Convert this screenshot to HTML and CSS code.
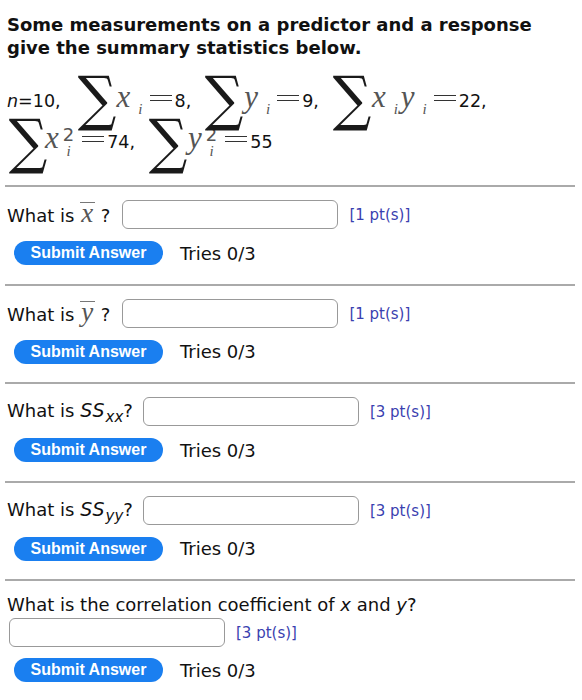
FILE: index.html
```html
<!DOCTYPE html>
<html>
<head>
<meta charset="utf-8">
<link rel="stylesheet" href="styles.css">
</head>
<body>
<div class="page">
  <h1 class="title">Some measurements on a predictor and a response give the summary statistics below.</h1>

  <div class="stats">
    <div class="mline one"><span class="num"><i>n</i>=10,</span><span class="sum lead">∑</span><span class="mv">x</span><span class="sub">i</span><span class="eq"></span><span class="num">8,</span><span class="sum">∑</span><span class="mv">y</span><span class="sub">i</span><span class="eq"></span><span class="num">9,</span><span class="sum">∑</span><span class="mv">x</span><span class="sub mid">i</span><span class="mv">y</span><span class="sub">i</span><span class="eq"></span><span class="num">22,</span></div>
    <div class="mline two"><span class="sum first">∑</span><span class="mv">x</span><span class="supsub"><span class="sp">2</span><span class="sb">i</span></span><span class="eq"></span><span class="num">74,</span><span class="sum">∑</span><span class="mv">y</span><span class="supsub"><span class="sp">2</span><span class="sb">i</span></span><span class="eq"></span><span class="num">55</span></div>
  </div>

  <section class="q">
    <div class="ask">
      <span class="label">What is <span class="bar">x</span> ?</span>
      <input class="field" type="text">
      <span class="pts">[1 pt(s)]</span>
    </div>
    <div class="act"><button class="submit">Submit Answer</button><span class="tries">Tries 0/3</span></div>
  </section>

  <section class="q">
    <div class="ask">
      <span class="label">What is <span class="bar">y</span> ?</span>
      <input class="field" type="text">
      <span class="pts">[1 pt(s)]</span>
    </div>
    <div class="act"><button class="submit">Submit Answer</button><span class="tries">Tries 0/3</span></div>
  </section>

  <section class="q">
    <div class="ask">
      <span class="label ss">What is <i class="ssi">SS</i><sub class="ssub">xx</sub>?</span>
      <input class="field" type="text">
      <span class="pts">[3 pt(s)]</span>
    </div>
    <div class="act"><button class="submit">Submit Answer</button><span class="tries">Tries 0/3</span></div>
  </section>

  <section class="q">
    <div class="ask">
      <span class="label ss">What is <i class="ssi">SS</i><sub class="ssub">yy</sub>?</span>
      <input class="field" type="text">
      <span class="pts">[3 pt(s)]</span>
    </div>
    <div class="act"><button class="submit">Submit Answer</button><span class="tries">Tries 0/3</span></div>
  </section>

  <section class="q last">
    <div class="qtext">What is the correlation coefficient of <i>x</i> and <i>y</i>?</div>
    <div class="ask tight">
      <input class="field" type="text">
      <span class="pts">[3 pt(s)]</span>
    </div>
    <div class="act"><button class="submit">Submit Answer</button><span class="tries">Tries 0/3</span></div>
  </section>
</div>
</body>
</html>
```

FILE: styles.css
```css
html, body {
  margin: 0;
  padding: 0;
  background: #fff;
}

body {
  font-family: "DejaVu Sans", Verdana, sans-serif;
  color: #111;
}

.page {
  width: 570px;
  padding: 0 7px 0 5px;
}

.title {
  margin: 13px 0 0 2px;
  font-size: 18px;
  line-height: 23px;
  font-weight: bold;
  width: 560px;
}

.stats {
  margin: 22px 0 0 2px;
  height: 104px;
}

.mline {
  font-size: 17.5px;
  line-height: 41px;
  height: 41px;
  white-space: nowrap;
}

.num {
  color: #111;
}

.num i {
  font-style: italic;
}

.sum {
  display: inline-block;
  width: 37px;
  text-align: center;
  font-family: "DejaVu Serif", "Liberation Serif", serif;
  font-size: 60px;
  height: 20px;
  line-height: 20px;
  vertical-align: -12px;
  color: #1a1a1a;
  margin-left: 12px;
  margin-right: 4px;
  transform: scaleX(0.9);
}

.two .sum {
  vertical-align: -14px;
}

.sum.lead {
  margin-left: 15px;
}

.sum.first {
  margin-left: 0;
  margin-right: 1px;
}

.mv {
  font-family: "Liberation Serif", "DejaVu Serif", serif;
  font-style: italic;
  font-size: 31px;
  line-height: 20px;
  color: #555;
}

.sub {
  font-family: "Liberation Serif", serif;
  font-style: italic;
  font-size: 15px;
  line-height: 10px;
  color: #555;
  vertical-align: -7px;
  margin: 0 7px 0 8px;
}

.sub.mid {
  margin-right: 3px;
}

.supsub {
  display: inline-flex;
  flex-direction: column;
  align-items: center;
  vertical-align: 7px;
  line-height: 14px;
  margin: 0 8px 0 4px;
  font-family: "Liberation Serif", serif;
  color: #555;
}

.supsub .sp {
  font-size: 18px;
  font-family: "DejaVu Sans", sans-serif;
}

.supsub .sb {
  font-size: 15px;
  font-style: italic;
  margin-top: 2px;
}

.eq {
  display: inline-block;
  width: 22px;
  height: 4px;
  border-top: 1.5px solid #333;
  border-bottom: 1.5px solid #333;
  vertical-align: 6px;
  margin: 0 3px 0 0;
}

.q {
  border-top: 2px solid #aaa;
  padding: 13px 0 18.5px 2px;
}

.ask {
  display: flex;
  align-items: flex-start;
  height: 29px;
}

.label {
  font-size: 18px;
  line-height: 22px;
  padding-top: 2px;
  margin-right: 12px;
  white-space: nowrap;
}

.label.ss {
  margin-right: 10px;
}

.bar {
  font-family: "Liberation Serif", serif;
  font-style: italic;
  font-size: 27px;
  color: #555;
  display: inline-block;
  line-height: 20px;
  padding: 0 2px 0 1px;
  border-top: 1.5px solid #777;
}

.ssi {
  font-size: 19px;
  letter-spacing: 1px;
}

.ssub {
  font-size: 15px;
  font-style: italic;
  vertical-align: -5px;
  line-height: 0;
}

.field {
  box-sizing: border-box;
  width: 216px;
  height: 29px;
  border: 1px solid #999;
  border-radius: 6px;
  margin: 0;
  padding: 0 6px;
  background: #fff;
}

.pts {
  font-size: 15px;
  line-height: 22px;
  padding-top: 4px;
  margin-left: 11px;
  color: #3a3fb0;
  white-space: nowrap;
}

.act {
  display: flex;
  align-items: center;
  margin-top: 12px;
  height: 24px;
}

.submit {
  height: 24px;
  border: none;
  border-radius: 12px;
  background: #1a7ff0;
  color: #fff;
  font-family: "Liberation Sans", Arial, sans-serif;
  font-weight: bold;
  font-size: 16px;
  padding: 0 16.5px;
  margin-left: 7px;
}

.tries {
  font-size: 18px;
  margin-left: 17px;
}

.qtext {
  font-size: 18px;
  line-height: 22px;
}

.ask.tight {
  margin-top: 2px;
}

.ask.tight .field {
  margin-left: 2px;
}

.last .act {
  margin-top: 11px;
}
```
